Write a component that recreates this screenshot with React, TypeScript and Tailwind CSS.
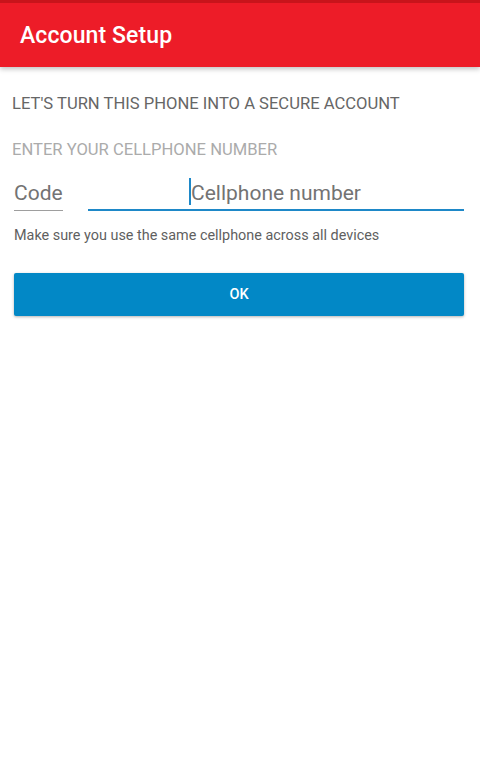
export default function App() {
    return (
        <div className="min-h-[770px] bg-white" style={{ fontFamily: 'Roboto, "Liberation Sans", sans-serif' }}>
            {/* Status strip + toolbar */}
            <div className="relative z-10 shadow-[0_2px_5px_rgba(0,0,0,0.25)]">
                <div className="h-[3px] bg-[#c8141b]" />
                <div className="h-16 bg-[#ed1c28] flex items-center px-5 pt-[2px]">
                    <h1 className="text-[23px] font-medium text-white tracking-[0.1px]">Account Setup</h1>
                </div>
            </div>

            <div className="px-3 pt-[27px]">
                <p className="text-[16.6px] leading-5 text-[#666666]">LET'S TURN THIS PHONE INTO A SECURE ACCOUNT</p>
                <p className="mt-[26px] text-[16.6px] leading-5 text-[#ababab]">ENTER YOUR CELLPHONE NUMBER</p>

                {/* Inputs */}
                <div className="mt-[19px] flex items-end gap-[25px] pl-[2px] pr-1">
                    <div className="w-[49px] border-b border-[#9e9e9e] pb-[3px]">
                        <span className="text-[21px] leading-7 text-[#737373]">Code</span>
                    </div>
                    <div className="flex-1 border-b-2 border-[#1e88c8] pb-[2px] flex justify-center">
                        <span className="relative text-[21px] leading-7 text-[#737373]">
                            <span className="absolute -left-[2px] top-[-1px] w-[2px] h-[27px] bg-[#1e88c8]" />
                            Cellphone number
                        </span>
                    </div>
                </div>

                <p className="mt-[15px] pl-[2px] text-[14.4px] leading-5 text-[#5f5f5f]">
                    Make sure you use the same cellphone across all devices
                </p>

                <div className="mt-[27px] pl-[2px] pr-1">
                    <button className="w-full h-[43px] rounded-[2px] bg-[#0288c6] text-white text-[14.5px] font-medium shadow-[0_1px_3px_rgba(0,0,0,0.3)]">
                        OK
                    </button>
                </div>
            </div>
        </div>
    );
}
